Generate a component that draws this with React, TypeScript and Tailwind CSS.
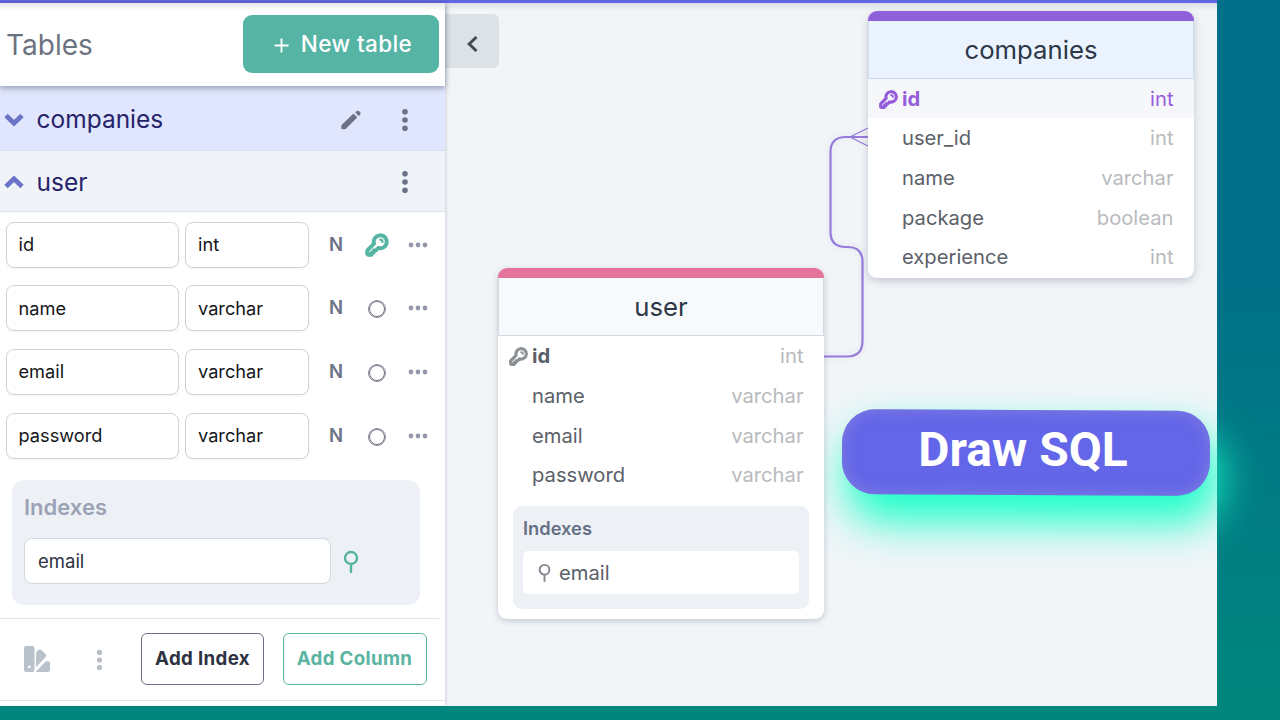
import React from 'react';

type Column = { name: string; type: string; primary?: boolean };

const userColumns: Column[] = [
  { name: 'id', type: 'int', primary: true },
  { name: 'name', type: 'varchar' },
  { name: 'email', type: 'varchar' },
  { name: 'password', type: 'varchar' },
];

const companyColumns: Column[] = [
  { name: 'id', type: 'int', primary: true },
  { name: 'user_id', type: 'int' },
  { name: 'name', type: 'varchar' },
  { name: 'package', type: 'boolean' },
  { name: 'experience', type: 'int' },
];

const KeyIcon = ({ className }: { className: string }) => (
  <svg viewBox="0 0 24 24" fill="none" stroke="currentColor" strokeLinejoin="round" strokeLinecap="round" className={className}>
    <path strokeWidth="3.6" d="M21 9a6 6 0 01-7.743 5.743L11 17H9v2H7v2H4a1 1 0 01-1-1v-2.586a1 1 0 01.293-.707l5.964-5.964A6 6 0 1121 9z" />
    <path strokeWidth="2.2" d="M15 7a2 2 0 012 2" />
  </svg>
);

const PinIcon = ({ className }: { className: string }) => (
  <svg viewBox="0 0 16 24" fill="none" stroke="currentColor" strokeWidth="2.4" className={className}>
    <circle cx="8" cy="8" r="6" />
    <path d="M8 14v9" />
  </svg>
);

const PencilIcon = () => (
  <svg viewBox="0 0 20 20" fill="currentColor" className="size-5">
    <path d="M.8 14.7 12 3.900q.4-.4.8 0L16 7q.4.4 0 .8L4.900 18.800q-.5.5-1.200.5H1.500Q.3 19.300.3 18.100V16q0-.8.5-1.300z" />
    <path d="M14.300 2.400 15.400 1.300q1.400-1.100 2.800 0l.7.800q1.300 1.400 0 2.800l-1.200 1.100z" />
  </svg>
);

const SwatchIcon = () => (
  <svg viewBox="0 0 26 26" className="size-[26px]">
    <g fill="#b9c1cb">
      <path fillRule="evenodd" d="M2 0h6.500a2 2 0 012 2v22a2 2 0 01-2 2H2a2 2 0 01-2-2V2a2 2 0 012-2zM5.300 22.200a1.400 1.400 0 100-2.800 1.400 1.400 0 000 2.800z" />
      <path d="M12 6.200 14.200 4q1.600-1.200 3.200 0l4.300 4.300q1.300 1.400 0 2.800L12 21.200z" />
      <path d="M12 25.500 22 15.200h2a2 2 0 012 2V24a2 2 0 01-2 2H12z" />
    </g>
  </svg>
);

const Chevron = ({ up }: { up?: boolean }) => (
  <svg viewBox="0 0 20 14" fill="none" stroke="currentColor" strokeWidth="4.800" className="w-5 h-3.5 text-[#6a73c6]">
    <path d={up ? 'M2 11.500 10 3.800 18 11.500' : 'M2 2.500 10 10.200 18 2.500'} />
  </svg>
);

const VerticalDots = ({ className }: { className: string }) => (
  <svg viewBox="0 0 6 24" fill="currentColor" className={className}>
    <circle cx="3" cy="3.700" r="2.800" />
    <circle cx="3" cy="12" r="2.800" />
    <circle cx="3" cy="20.300" r="2.800" />
  </svg>
);

const ColumnRow: React.FC<{ column: Column }> = ({ column }) => (
  <li className="flex items-center h-[46px]">
    <div className="w-[173.500px] h-[46px] flex items-center rounded-lg border border-[#d0d2da] pl-3 text-[18.200px] text-[#15161a] shadow-xs">
      {column.name}
    </div>
    <div className="ml-1.5 w-[124px] h-[46px] flex items-center rounded-lg border border-[#d0d2da] pl-3 text-[18.200px] text-[#15161a] shadow-xs">
      {column.type}
    </div>
    <span className="ml-[19px] w-4 text-center text-[18.500px] font-semibold text-[#6b7186]">N</span>
    <span className="ml-[21px] w-6 flex justify-center">
      {column.primary ? (
        <KeyIcon className="size-[26px] shrink-0 text-[#56b4a3]" />
      ) : (
        <span className="mt-0.5 size-4 rounded-full border-[1.500px] border-[#6b7080] outline-[0.400px] outline-[#8b8f9c]" />
      )}
    </span>
    <svg viewBox="0 0 20 6" fill="currentColor" className="ml-[19px] w-5 h-1.5 text-[#9498aa]">
      <circle cx="3" cy="3" r="2.400" />
      <circle cx="10" cy="3" r="2.400" />
      <circle cx="17" cy="3" r="2.400" />
    </svg>
  </li>
);

const Sidebar: React.FC = () => (
  <aside className="relative w-[445px] shrink-0 flex flex-col bg-white shadow-[1px_0_3px_rgba(60,60,80,0.18)]">
    <header className="relative z-10 h-[83px] flex items-center justify-between pl-1.5 pr-1.5 bg-white shadow-[0_2px_6px_rgba(50,60,80,0.45)]">
      <h1 className="text-[28px] leading-none text-[#6b7280]">Tables</h1>
      <button className="w-[196px] h-[58px] mb-px flex items-center justify-center gap-3 rounded-[9px] bg-[#56b4a5] pl-1 text-white text-[22.500px] font-medium tracking-[0.400px]">
        <svg viewBox="0 0 16 16" stroke="currentColor" strokeWidth="2" className="size-[15px] mt-0.5">
          <path d="M8 0.500v15M0.500 8h15" />
        </svg>
        New table
      </button>
    </header>
    <div className="h-[65px] flex items-center border-b border-[#d8deea] bg-[#e0e6fd] pt-[3px] pl-1 text-[#26236b]">
      <Chevron />
      <span className="ml-[12.500px] grow text-[24.500px]">companies</span>
      <span className="text-[#6b7186] mr-[41px]"><PencilIcon /></span>
      <VerticalDots className="w-1.5 h-6 mr-[37px] text-[#6b7186]" />
    </div>
    <div className="h-[61px] flex items-center border-b border-[#dfe4ea] bg-[#f0f4f9] pt-0.5 pl-1 text-[#26236b]">
      <Chevron up />
      <span className="ml-[12.500px] grow text-[24.500px]">user</span>
      <VerticalDots className="w-1.5 h-6 mr-[37px] text-[#6b7186]" />
    </div>
    <ul className="mt-[9.500px] pl-[5.500px] flex flex-col gap-[17.800px]">
      {userColumns.map((column) => (
        <ColumnRow key={column.name} column={column} />
      ))}
    </ul>
    <section className="ml-3 mt-[21px] w-[408px] h-[125px] rounded-xl bg-[#edf1f6] px-3 pt-[11px]">
      <h2 className="text-[22px] leading-8 font-semibold text-[#9ba2b5]">Indexes</h2>
      <div className="mt-[15.500px] flex items-center">
        <div className="w-[307px] h-[46px] flex items-center rounded-lg border border-[#d0d6dd] bg-white pl-[13px] text-[18.500px] text-[#2d3140]">
          email
        </div>
        <PinIcon className="ml-3 mt-0.5 w-4 h-6 text-[#56b4a3]" />
      </div>
    </section>
    <footer className="mt-[13px] h-[82px] w-[439px] flex items-center border-t border-[#e0e3e7] pl-6">
      <SwatchIcon />
      <VerticalDots className="ml-[46px] mt-px w-[7px] h-[22px] text-[#b8bcc3]" />
      <button className="ml-[38px] w-[123px] h-[52px] rounded-md border-[1.500px] border-[#6d7084] text-[18.700px] font-bold tracking-[0.350px] text-[#2d3342]">
        Add Index
      </button>
      <button className="ml-[18.500px] w-[144px] h-[52px] rounded-md border-[1.500px] border-[#5ab4a1] text-[18.700px] font-bold tracking-[0.350px] text-[#5ab4a1]">
        Add Column
      </button>
    </footer>
    <div className="border-t border-[#e0e3e7]" />
  </aside>
);

const EntityRow: React.FC<{ column: Column; highlighted?: boolean }> = ({ column, highlighted }) => (
  <li className={`h-[39.700px] flex items-center pt-px pr-[20.500px] text-[20.200px] ${highlighted ? 'bg-[#f5f7fa] text-[#965ddb]' : 'text-[#5b6069]'}`}>
    <span className="w-[34px] pl-2.5">
      {column.primary && <KeyIcon className={highlighted ? 'mt-px size-[21px]' : 'mt-px size-[21px] text-[#8c9196]'} />}
    </span>
    <span className={column.primary ? 'grow font-bold' : 'grow'}>{column.name}</span>
    <span className={highlighted ? '' : 'text-[#b9babd]'}>{column.type}</span>
  </li>
);

export default function App() {
  return (
    <div className="w-[1280px] h-[720px] overflow-hidden bg-linear-to-b from-[#006f89] from-35% to-[#00877d] font-[Inter,sans-serif]">
      <div className="w-[1217px] h-[706px] flex flex-col">
        <div className="h-[3px] shrink-0 bg-[#6366e4]" />
        <main className="relative h-[703px] flex bg-[#f1f5f8]">
          <Sidebar />
          <button className="mt-[11px] w-[54px] h-[54px] flex items-center justify-center rounded-r-md bg-[#dce2e6] text-[#454a54]">
            <svg viewBox="0 0 12 18" fill="none" stroke="currentColor" strokeWidth="3" className="w-3 h-[18px] mt-1.5">
              <path d="M10.500 2 3.200 9l7.300 7" />
            </svg>
          </button>
          <div className="absolute inset-x-0 top-0 h-2 z-20 bg-linear-to-b from-[#5a607a]/15 to-transparent" />

          {/* relation user.id -> companies.user_id */}
          <svg viewBox="0 0 60 240" fill="none" stroke="#967bdc" className="absolute left-[815px] top-[124px] w-[60px] h-[240px]">
            <path stroke="#edf0f5" strokeWidth="10" d="M55 10H31Q15.500 10 15.500 25V105Q15.500 120 31 120H33Q47.500 120 47.500 135V214Q47.500 229.500 32 229.500H5" />
            <path strokeWidth="2.200" d="M55 10H31Q15.500 10 15.500 25V105Q15.500 120 31 120H33Q47.500 120 47.500 135V214Q47.500 229.500 32 229.500H5" />
            <path strokeWidth="1.300" d="M53 1 35 10l18 9" />
          </svg>

          <div className="absolute left-[842px] top-[407px] w-[368px] h-[85px] rotate-[0.3deg] rounded-[33px] bg-[#6366e8] shadow-[7px_25px_44px_2px_rgba(24,255,200,1),inset_0_0_16px_rgba(165,150,220,0.5)]">
            <div className="h-20 flex items-center justify-center -rotate-[0.3deg] pr-1.5 font-[Roboto,sans-serif] text-[48px] font-bold text-white">
              Draw SQL
            </div>
          </div>

          <div className="absolute left-[868px] top-[7.500px] w-[326px] h-[267px] overflow-hidden rounded-[9px] bg-white shadow-[0_3px_9px_rgba(60,70,90,0.25)]">
            <div className="h-2.5 bg-[#8f61d9]" />
            <h3 className="h-[58px] flex items-center justify-center border border-t-0 border-[#cddaf0] bg-[#ebf3fe] pt-0.5 text-[25.700px] text-[#2d3748]">
              companies
            </h3>
            <ul>
              {companyColumns.map((column) => (
                <EntityRow key={column.name} column={column} highlighted={column.primary} />
              ))}
            </ul>
          </div>

          <div className="absolute left-[498px] top-[265px] w-[326px] h-[351px] overflow-hidden rounded-[9px] bg-white shadow-[0_2px_6px_rgba(60,70,90,0.25)]">
            <div className="h-2.5 bg-[#e5749b]" />
            <h3 className="h-[58px] flex items-center justify-center border border-t-0 border-[#d3dae5] bg-[#f7fafc] pt-0.5 text-[25.700px] text-[#2d3748]">
              user
            </h3>
            <ul>
              {userColumns.map((column) => (
                <EntityRow key={column.name} column={column} />
              ))}
            </ul>
            <div className="mx-[15px] mt-[11px] h-[103px] rounded-[9px] bg-[#edf1f6] px-2.5 pt-[9px]">
              <h4 className="h-[26px] leading-[26px] text-[18.300px] font-semibold text-[#667085]">Indexes</h4>
              <div className="mt-2.5 h-[43px] flex items-center rounded-[5px] bg-white pt-0.5 pl-[15px] text-[20.200px] text-[#5b6069]">
                <PinIcon className="mr-2 w-[13px] h-5 text-[#858a90]" />
                email
              </div>
            </div>
          </div>
        </main>
      </div>
    </div>
  );
}
